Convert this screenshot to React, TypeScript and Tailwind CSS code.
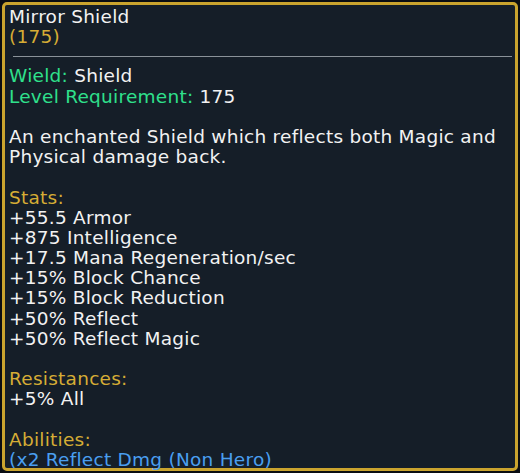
import React from "react";

const W = "text-[#f2f2f2]";
const G = "text-[#d6ad35]";
const GR = "text-[#2fe08c]";
const B = "text-[#4a9ff0]";

function Line({ children, className = "" }: { children?: React.ReactNode; className?: string }) {
  return <div className={`h-[20.2px] leading-[20.2px] whitespace-nowrap ${className}`}>{children}</div>;
}

export default function App() {
  return (
    <div className="w-[520px] h-[473px] bg-[#0a0d12] p-[2px]" style={{ fontFamily: '"DejaVu Sans", sans-serif' }}>
      <div className="h-full border-[3px] border-[#caa42e] rounded-[5px] bg-[#151e28] pl-[4px] pt-[2px] text-[18.5px] tracking-[0.25px]">
        <Line className={W}>Mirror Shield</Line>
        <Line className={G}>(175)</Line>
        <div className="h-[19px] flex items-center pl-[4px] pr-[3px]">
          <div className="h-[1px] w-full bg-[#8a9299]" />
        </div>
        <Line>
          <span className={GR}>Wield:</span> <span className={W}>Shield</span>
        </Line>
        <Line>
          <span className={GR}>Level Requirement:</span> <span className={W}>175</span>
        </Line>
        <Line />
        <Line className={W}>An enchanted Shield which reflects both Magic and</Line>
        <Line className={W}>Physical damage back.</Line>
        <Line />
        <Line className={G}>Stats:</Line>
        <Line className={W}>+55.5 Armor</Line>
        <Line className={W}>+875 Intelligence</Line>
        <Line className={W}>+17.5 Mana Regeneration/sec</Line>
        <Line className={W}>+15% Block Chance</Line>
        <Line className={W}>+15% Block Reduction</Line>
        <Line className={W}>+50% Reflect</Line>
        <Line className={W}>+50% Reflect Magic</Line>
        <Line />
        <Line className={G}>Resistances:</Line>
        <Line className={W}>+5% All</Line>
        <Line />
        <Line className={G}>Abilities:</Line>
        <Line className={B}>(x2 Reflect Dmg (Non Hero)</Line>
      </div>
    </div>
  );
}
